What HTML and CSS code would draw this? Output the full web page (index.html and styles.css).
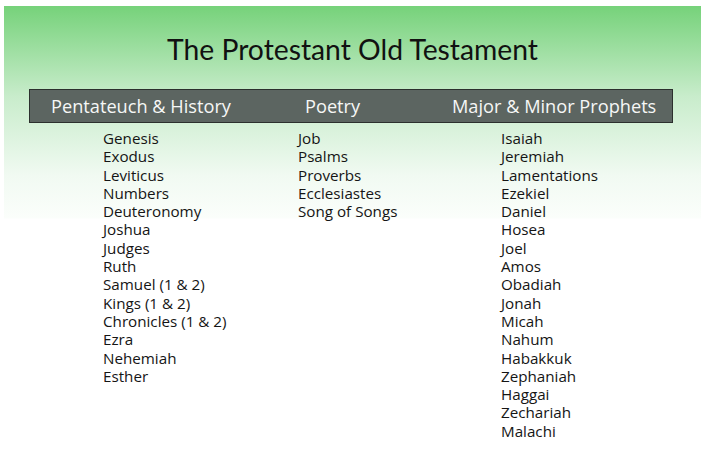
FILE: index.html
```html
<!DOCTYPE html>
<html>
<head>
<meta charset="utf-8">
<link rel="stylesheet" href="styles.css">
</head>
<body>
<div class="panel">
  <h1 class="title">The Protestant Old Testament</h1>
  <div class="bar">
    <div class="head h1c">Pentateuch &amp; History</div>
    <div class="head h2c">Poetry</div>
    <div class="head h3c">Major &amp; Minor Prophets</div>
  </div>
  <div class="cols">
    <ul class="list l1">
      <li>Genesis</li><li>Exodus</li><li>Leviticus</li><li>Numbers</li><li>Deuteronomy</li><li>Joshua</li><li>Judges</li><li>Ruth</li><li>Samuel (1 &amp; 2)</li><li>Kings (1 &amp; 2)</li><li>Chronicles (1 &amp; 2)</li><li>Ezra</li><li>Nehemiah</li><li>Esther</li>
    </ul>
    <ul class="list l2">
      <li>Job</li><li>Psalms</li><li>Proverbs</li><li>Ecclesiastes</li><li>Song of Songs</li>
    </ul>
    <ul class="list l3">
      <li>Isaiah</li><li>Jeremiah</li><li>Lamentations</li><li>Ezekiel</li><li>Daniel</li><li>Hosea</li><li>Joel</li><li>Amos</li><li>Obadiah</li><li>Jonah</li><li>Micah</li><li>Nahum</li><li>Habakkuk</li><li>Zephaniah</li><li>Haggai</li><li>Zechariah</li><li>Malachi</li>
    </ul>
  </div>
</div>
</body>
</html>
```
FILE: styles.css
```css
html, body { margin: 0; padding: 0; background: #ffffff; }
body { width: 705px; height: 462px; overflow: hidden; }
.panel {
  margin: 6px 4px 0 4px;
  height: 456px;
  background: linear-gradient(to bottom, #76d27a 0px, #c8eccb 90px, #f1faf2 170px, #fbfefb 212px, #ffffff 213px) no-repeat;
  background-size: 100% 213px;
}
.title {
  margin: 0;
  padding-top: 26px;
  height: 57px;
  box-sizing: border-box;
  text-align: center;
  font-family: Lato, sans-serif;
  font-weight: 400;
  font-size: 28.3px;
  line-height: 34px;
  color: #111;
}
.bar {
  margin: 26px 0 0 25px;
  width: 644px;
  height: 34px;
  box-sizing: border-box;
  background: #5c6561;
  border: 1px solid #2c302e;
  display: flex;
  align-items: center;
  font-family: "Open Sans", sans-serif;
  font-size: 18.2px;
  color: #f6f7f6;
}
.head { white-space: nowrap; }
.h1c { margin-left: 21px; width: 254px; }
.h2c { width: 147px; }
.cols {
  display: flex;
  margin-top: 6px;
  font-family: "Open Sans", sans-serif;
  font-size: 15.2px;
  line-height: 18.3px;
  color: #151515;
}
.list { list-style: none; margin: 0; padding: 0; }
.l1 { margin-left: 99px; width: 195px; }
.l2 { width: 203px; }
```
